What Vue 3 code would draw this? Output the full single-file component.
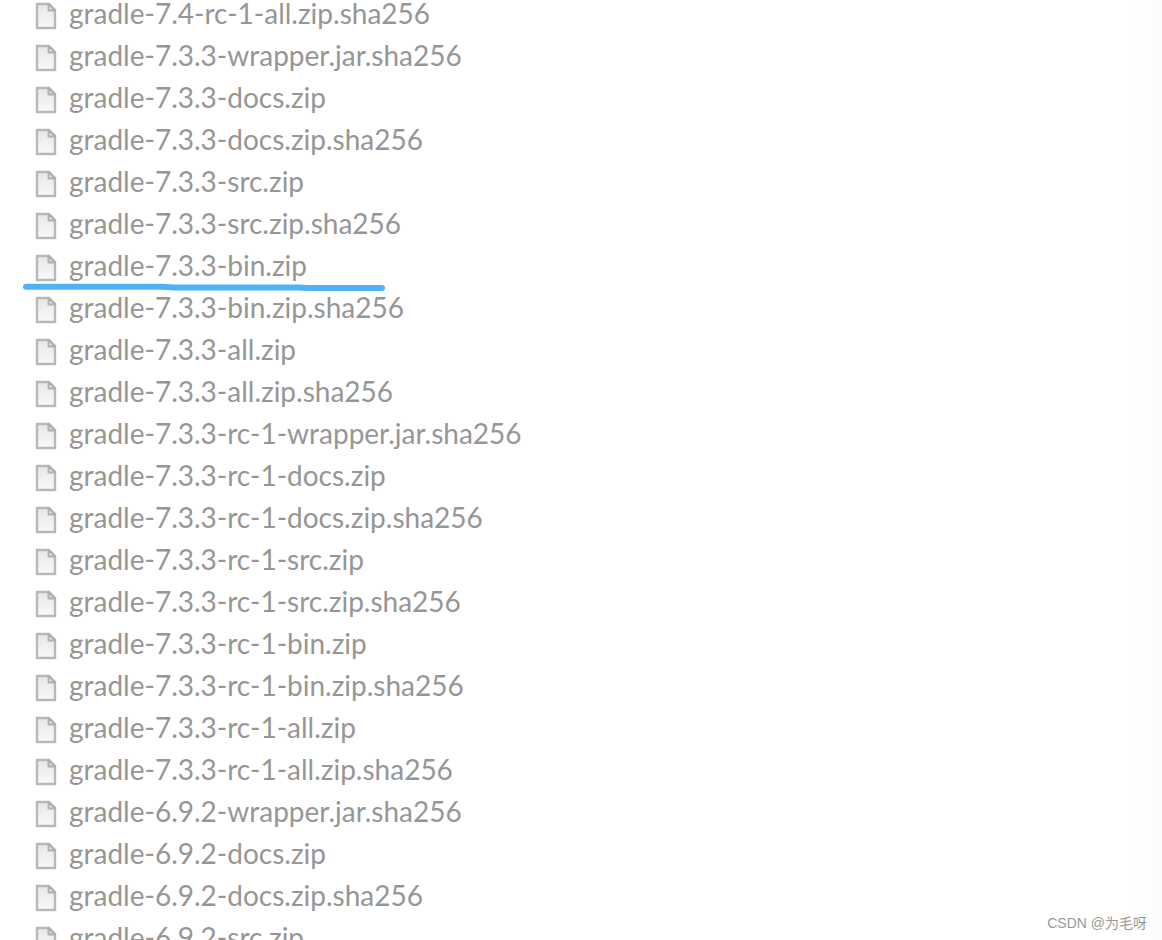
<script setup>
const files = [
  'gradle-7.4-rc-1-all.zip.sha256',
  'gradle-7.3.3-wrapper.jar.sha256',
  'gradle-7.3.3-docs.zip',
  'gradle-7.3.3-docs.zip.sha256',
  'gradle-7.3.3-src.zip',
  'gradle-7.3.3-src.zip.sha256',
  'gradle-7.3.3-bin.zip',
  'gradle-7.3.3-bin.zip.sha256',
  'gradle-7.3.3-all.zip',
  'gradle-7.3.3-all.zip.sha256',
  'gradle-7.3.3-rc-1-wrapper.jar.sha256',
  'gradle-7.3.3-rc-1-docs.zip',
  'gradle-7.3.3-rc-1-docs.zip.sha256',
  'gradle-7.3.3-rc-1-src.zip',
  'gradle-7.3.3-rc-1-src.zip.sha256',
  'gradle-7.3.3-rc-1-bin.zip',
  'gradle-7.3.3-rc-1-bin.zip.sha256',
  'gradle-7.3.3-rc-1-all.zip',
  'gradle-7.3.3-rc-1-all.zip.sha256',
  'gradle-6.9.2-wrapper.jar.sha256',
  'gradle-6.9.2-docs.zip',
  'gradle-6.9.2-docs.zip.sha256',
  'gradle-6.9.2-src.zip',
]
const marked = 'gradle-7.3.3-bin.zip'
</script>

<template>
  <main class="page">
    <svg class="defs" width="0" height="0" aria-hidden="true">
      <linearGradient id="sheet" x1="0" y1="0" x2="0" y2="1">
        <stop offset="0" stop-color="#e8e8e8" />
        <stop offset="1" stop-color="#f8f8f8" />
      </linearGradient>
    </svg>
    <ul class="files">
      <li v-for="file in files" :key="file" class="row">
        <svg class="icon" viewBox="0 0 22 28" aria-hidden="true">
          <path d="M2 2H14L20 8V26H2Z" fill="url(#sheet)" stroke="#b8b8b8" stroke-width="2.4" />
          <path d="M13.5 2V8.5H20Z" fill="#e4e4e4" stroke="#b0b0b0" stroke-width="2" stroke-linejoin="round" />
        </svg>
        <a class="name" href="#">{{ file }}</a>
        <svg v-if="file === marked" class="mark" viewBox="0 0 362 8" aria-hidden="true">
          <path d="M3 3.7H140L150 4.4H275L285 5H359" />
        </svg>
      </li>
    </ul>
    <p class="credit">CSDN @为毛呀</p>
  </main>
</template>

<style>
body {
  margin: 0;
  background: #fff;
}
</style>

<style scoped>
.page {
  position: relative;
  height: 100vh;
  overflow: hidden;
  background: linear-gradient(to left, #fcfcfc, #fff 36px);
}
.defs {
  position: absolute;
}
.files {
  margin: -8px 0 0;
  padding: 0 0 0 35px;
  list-style: none;
}
.row {
  position: relative;
  display: flex;
  align-items: flex-start;
  gap: 12px;
  height: 42px;
}
.icon {
  width: 22px;
  height: 28px;
  margin-top: 10px;
}
.name {
  color: #969696;
  font: 28px/42px Lato, sans-serif;
  text-decoration: none;
  white-space: nowrap;
}
.mark {
  position: absolute;
  left: -12px;
  bottom: -5px;
  width: 362px;
  height: 8px;
  fill: none;
  stroke: #4db2f8;
  stroke-width: 6;
  stroke-linecap: round;
  z-index: 1;
}
.credit {
  position: absolute;
  right: 15px;
  bottom: 7px;
  margin: 0;
  color: #999;
  font: 14px/20px "Liberation Sans", "Noto Sans CJK SC", sans-serif;
}
</style>
